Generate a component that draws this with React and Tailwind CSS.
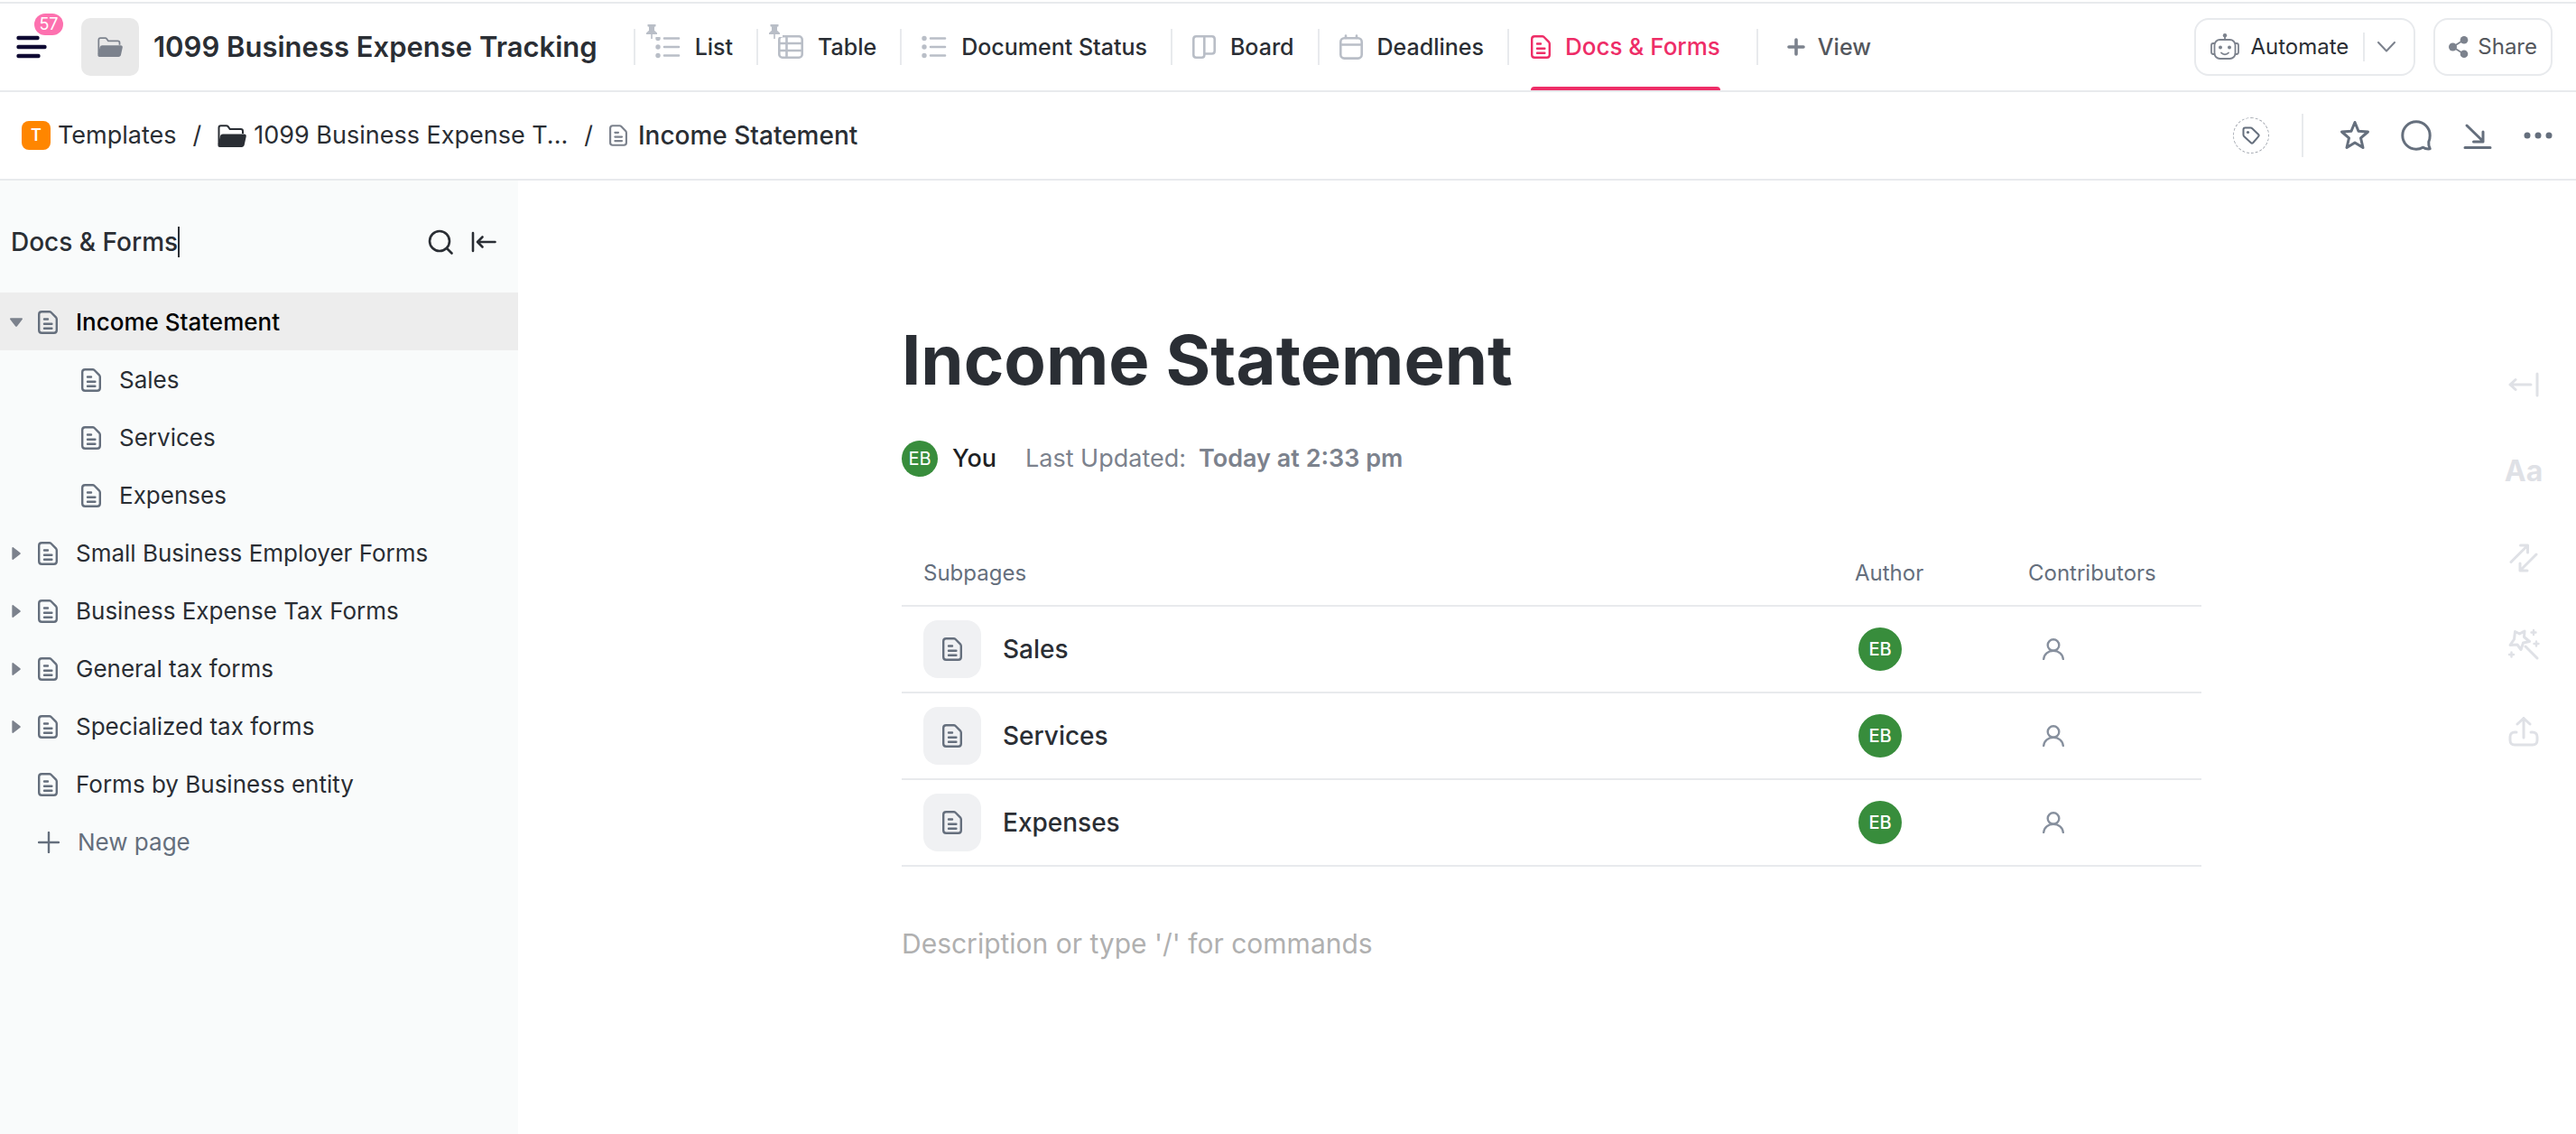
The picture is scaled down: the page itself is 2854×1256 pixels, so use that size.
import React, { useState } from "react"

const DocIcon = ({ className }) => (
  <svg viewBox="0 0 22 26" fill="none" stroke="currentColor" strokeLinecap="round" strokeLinejoin="round" className={className}>
    <path strokeWidth="2.4" d="M4.2 1.2h8.4c.8 0 1.5.3 2 .8l5.3 5.4c.6.6.9 1.4.9 2.2v12.200c0 1.700-1.300 3-3 3H4.200c-1.700 0-3-1.300-3-3V4.200c0-1.700 1.300-3 3-3z" />
    <path strokeWidth="2.4" d="M7 9.500h4M7 14.700h8.400M7 19.700h8.400" />
  </svg>
)

const FolderIcon = ({ className }) => (
  <svg viewBox="0 0 32 25" className={className}>
    <path fill="none" stroke="currentColor" strokeWidth="2" d="M1.500 22V3.500c0-1.400.8-2.300 2.200-2.300h6c.9 0 1.500.3 2 1l2 2.800h12c1.400 0 2.300.9 2.300 2.300V10" />
    <path fill="currentColor" d="M6 10.500h23.500c1.700 0 2.500 1.200 2.200 2.800l-2 9.200c-.4 1.500-1.400 2.500-3 2.500H2.500C1 25 .2 24 .5 22.500L3 12.800c.4-1.500 1.500-2.300 3-2.300z" />
  </svg>
)

const ListIcon = () => (
  <svg viewBox="0 0 28 26" className="h-[26px] w-7" fill="none" stroke="currentColor" strokeWidth="2.6" strokeLinecap="round">
    <path d="M10 3.500h16M10 13h16M10 22.500h16" />
    <g fill="currentColor" stroke="none">
      <circle cx="3" cy="3.500" r="2.700" />
      <circle cx="3" cy="13" r="2.700" />
      <circle cx="3" cy="22.500" r="2.700" />
    </g>
  </svg>
)

const TableIcon = () => (
  <svg viewBox="0 0 28 26" className="h-[26px] w-7" fill="none" stroke="currentColor" strokeWidth="2.6">
    <rect x="1.300" y="1.300" width="25.400" height="23.400" rx="3.500" />
    <path d="M1.200 9h25.600M1.200 17h25.600M9.500 1.200v23.600" />
  </svg>
)

const BoardIcon = () => (
  <svg viewBox="0 0 26 26" className="size-[26px]" fill="none" stroke="currentColor" strokeWidth="2.6" strokeLinejoin="round">
    <path d="M4.300 1.300h17.400c1.700 0 3 1.300 3 3v13.200c0 1.700-1.300 3-3 3h-8.400V22c0 1.600-1.200 2.700-2.800 2.700H4.300c-1.700 0-3-1.300-3-3V4.300c0-1.700 1.300-3 3-3zM13.300 1.300v20" />
  </svg>
)

const CalendarIcon = () => (
  <svg viewBox="0 0 26 28" className="h-7 w-[26px]" fill="none" stroke="currentColor" strokeWidth="2.6" strokeLinecap="round">
    <rect x="1.300" y="4.200" width="23.400" height="22.400" rx="4" />
    <path d="M1.200 11.500h23.600M7 4V1.500M19 4V1.500" />
  </svg>
)

// the white outline cuts the pin out of the icon below it
const PinIcon = () => (
  <svg viewBox="0 0 12 16" className="absolute -left-2.5 -top-3 h-4 w-3 overflow-visible fill-[#b9bec7] stroke-white" strokeWidth="6">
    <path style={{ paintOrder: "stroke" }} d="M1.500 0h9v2.200L9 2.800v4l3 2.700V11H6.800v5H5.200v-5H0V9.500l3-2.700v-4l-1.500-.6z" />
  </svg>
)

const PersonIcon = () => (
  <svg viewBox="0 0 24 24" className="size-6" fill="none" stroke="currentColor" strokeWidth="2.4" strokeLinecap="round">
    <circle cx="12" cy="7.500" r="6.300" />
    <path d="M1.200 23c.5-5.500 5-9.200 10.800-9.200s10.300 3.700 10.800 9.200" />
  </svg>
)

const StrokeIcon = ({ viewBox, d, width, className }) => (
  <svg viewBox={viewBox} className={className} fill="none" stroke="currentColor" strokeWidth={width} strokeLinecap="round" strokeLinejoin="round">
    <path d={d} />
  </svg>
)

const RobotIcon = () => (
  <svg viewBox="0 0 32 30" className="h-[30px] w-8 text-[#7c828d]" fill="none" stroke="currentColor" strokeWidth="1.800" strokeLinecap="round">
    <rect x="4.500" y="7" width="23" height="21" rx="6" />
    <path d="M4.500 11H3.200C1.800 11 1 12 1 13.200v7.600C1 22 1.800 23 3.200 23h1.300M27.500 11h1.300c1.400 0 2.200 1 2.200 2.200v7.600c0 1.200-.8 2.200-2.200 2.200h-1.300M16 7V3M12 21.500c2 2.400 6 2.400 8 0" />
    <g fill="currentColor" stroke="none">
      <circle cx="16" cy="2.200" r="2.200" />
      <circle cx="11" cy="15.500" r="2" />
      <circle cx="21" cy="15.500" r="2" />
    </g>
  </svg>
)

const ShareIcon = () => (
  <svg viewBox="0 0 22 24" className="h-6 w-[22px] text-[#7c828d]" fill="currentColor">
    <path stroke="currentColor" strokeWidth="1.800" fill="none" d="M17 4 4.500 12 17 20" />
    <circle cx="4.500" cy="12" r="4.500" />
    <circle cx="17" cy="4.300" r="4.300" />
    <circle cx="17" cy="19.700" r="4.300" />
  </svg>
)

const WandIcon = () => (
  <svg viewBox="0 0 36 36" className="size-9" fill="none" stroke="currentColor" strokeWidth="3" strokeLinecap="round" strokeLinejoin="round">
    <path d="M8.500 3.500l5 2.500 5.500-3-.5 6.500 6 5-7 1.500-2.500 7.500-4-5.500-8 .5 4.500-6.500zM20 20l13 13" />
    <path strokeWidth="2.400" d="M29 2v5M26.500 4.500h5M32 14.500v5M29.500 17h5M4.500 26.500v5M2 29h5" />
  </svg>
)

const Avatar = ({ className }) => (
  <span className={`flex shrink-0 items-center justify-center rounded-full bg-[#388d3c] text-white ${className}`}>EB</span>
)

const tabs = [
  { name: "List", icon: <ListIcon />, pinned: true },
  { name: "Table", icon: <TableIcon />, pinned: true },
  { name: "Document Status", icon: <ListIcon /> },
  { name: "Board", icon: <BoardIcon /> },
  { name: "Deadlines", icon: <CalendarIcon /> },
  { name: "Docs & Forms", icon: <DocIcon className="h-[26px] w-[22px]" />, active: true }
]

const pages = [
  { name: "Income Statement", open: true, children: ["Sales", "Services", "Expenses"] },
  { name: "Small Business Employer Forms", children: [] },
  { name: "Business Expense Tax Forms", children: [] },
  { name: "General tax forms", children: [] },
  { name: "Specialized tax forms", children: [] },
  { name: "Forms by Business entity" }
]

const tools = [
  {
    label: "Collapse",
    icon: <StrokeIcon viewBox="0 0 34 28" width="3" className="h-7 w-[34px]" d="M25 14H2M8 8.500 2 14l6 5.500M32 2v24" />
  },
  { label: "Typography", icon: <span className="text-[32px] font-bold leading-8">Aa</span> },
  {
    label: "Relationships",
    icon: <StrokeIcon viewBox="0 0 32 32" width="3" className="size-8" d="M2 20.500 20.500 2M12.500 2h8v8M30 12 12 30M12 22v8h8" />
  },
  { label: "Magic", icon: <WandIcon /> },
  {
    label: "Export",
    icon: <StrokeIcon viewBox="0 0 34 34" width="3" className="size-[34px]" d="M17 24V2.500M10 9l7-6.500L24 9M9 18H7c-3 0-5 2-5 5v4c0 3 2 5 5 5h20c3 0 5-2 5-5v-4c0-3-2-5-5-5h-2" />
  }
]

const TopBar = () => (
  <header className="mt-0.5 flex h-[100px] items-center border-y-2 border-[#e8eaed] pl-4 pr-[26px]">
    <button aria-label="Menu" className="relative mr-[38px] pl-0.5">
      <svg viewBox="0 0 34 26" className="h-[26px] w-[34px]" stroke="#0f0a33" strokeWidth="4.400" strokeLinecap="round">
        <path d="M2.500 3h21M2.500 13h29M2.500 23h22" />
      </svg>
      <span className="absolute -top-6 left-[22px] flex h-6 w-8 items-center justify-center rounded-full bg-[#fd71af] text-[18px] leading-6 text-white">57</span>
    </button>
    <span className="mr-4 flex size-16 shrink-0 items-center justify-center rounded-[10px] bg-[#e9e9e9]">
      <FolderIcon className="h-[22px] w-7 text-[#7c828d]" />
    </span>
    <h1 className="whitespace-nowrap text-[31px] font-semibold leading-10">1099 Business Expense Tracking</h1>
    <nav className="ml-10 flex h-full items-center whitespace-nowrap text-[25px] font-medium leading-8">
      {tabs.map(tab => (
        <React.Fragment key={tab.name}>
          <span className="h-10 w-0.5 bg-[#e8eaed]" />
          <a
            href="#"
            className={`relative flex h-full items-center gap-4 ${tab.active ? "ml-6 mr-10 text-[26px] text-[#ee2d67]" : "ml-[22px] mr-[26px]"}`}
          >
            <span className={`relative ${tab.active ? "" : "text-[#b9bec7]"}`}>
              {tab.icon}
              {tab.pinned && <PinIcon />}
            </span>
            {tab.name}
            {tab.active && <span className="absolute inset-x-0 bottom-0 h-1 rounded-t bg-[#ee2d67]" />}
          </a>
        </React.Fragment>
      ))}
      <span className="h-10 w-0.5 bg-[#e8eaed]" />
      <button className="ml-8 flex items-center gap-[14px] text-[#54575d]">
        <StrokeIcon viewBox="0 0 20 20" width="3.600" className="size-5 text-[#7c828d]" d="M10 2v16M2 10h16" />
        View
      </button>
    </nav>
    <div className="ml-auto flex gap-5 text-[24px] leading-8">
      <div className="flex h-16 items-center rounded-2xl border-2 border-[#e8eaed] pl-4">
        <button className="flex items-center gap-3 pr-4">
          <RobotIcon />
          Automate
        </button>
        <button aria-label="Automate options" className="flex h-8 items-center border-l-2 border-[#e8eaed] pl-[14px] pr-5">
          <StrokeIcon viewBox="0 0 20 12" width="2" className="h-3 w-5 text-[#7c828d]" d="M1 1l9 9.500L19 1" />
        </button>
      </div>
      <button className="flex h-16 items-center gap-2.5 rounded-2xl border-2 border-[#e8eaed] px-[15px] text-[#54575d]">
        <ShareIcon />
        Share
      </button>
    </div>
  </header>
)

const Breadcrumbs = () => (
  <div className="flex h-[98px] items-center border-b-2 border-[#e8eaed] pl-6 pr-[26px] text-[27px] leading-8">
    <nav className="flex items-center whitespace-nowrap">
      <a href="#" className="flex items-center gap-2">
        <span className="flex size-8 items-center justify-center rounded-lg bg-[#ff8600] text-[18px] font-semibold leading-6 text-white">T</span>
        Templates
      </a>
      <span className="mx-[18px]">/</span>
      <a href="#" className="flex items-center gap-2">
        <FolderIcon className="h-[25px] w-8" />
        1099 Business Expense T...
      </a>
      <span className="mx-[18px]">/</span>
      <a href="#" className="flex items-center gap-3 text-[28px] font-medium">
        <DocIcon className="h-6 w-5 text-[#7c828d]" />
        Income Statement
      </a>
    </nav>
    <div className="ml-auto flex items-center text-[#656f7d]">
      <button aria-label="Tags" className="flex size-10 items-center justify-center rounded-full border border-dashed border-[#a5aab2]">
        <svg viewBox="0 0 20 20" className="size-5" fill="none" stroke="currentColor" strokeWidth="2" strokeLinejoin="round">
          <path d="M1.500 3.500c0-1.200.8-2 2-2h6c.7 0 1.200.2 1.700.7l6.800 6.600c.8.8.8 1.800 0 2.600L12.300 18c-.8.800-1.800.8-2.600 0L2.200 11c-.5-.5-.7-1-.7-1.700z" />
          <circle cx="6.500" cy="6.500" r="1.600" fill="currentColor" stroke="none" />
        </svg>
      </button>
      <span className="ml-9 mr-10 h-12 w-0.5 bg-[#e8eaed]" />
      <div className="flex items-center gap-[34px]">
        <button aria-label="Favorite">
          <StrokeIcon viewBox="0 0 34 34" width="3" className="size-[34px]" d="M17 2.500l4 9.700 10.500.8-8 6.800 2.500 10.700-9-5.600-9 5.600 2.500-10.700-8-6.800 10.500-.8z" />
        </button>
        <button aria-label="Comments">
          <StrokeIcon viewBox="0 0 34 34" width="3" className="size-[34px]" d="M17 1.800C8.500 1.800 1.800 8.500 1.800 17S8.500 32.200 17 32.200c2.700 0 5.200-.7 7.400-2 2 1.300 4.900 2 7.800 1.600-1.300-2.500-1.700-5-1.400-7.600 1-2.200 1.400-4.600 1.400-7.200C32.200 8.500 25.500 1.800 17 1.800z" />
        </button>
        <button aria-label="Minimize">
          <StrokeIcon viewBox="0 0 34 34" width="3" className="size-[34px]" d="M5 6l18 17.500M23 13v11H12.500M3 30.500h28" />
        </button>
        <button aria-label="More">
          <svg viewBox="0 0 32 8" className="h-2 w-8" fill="currentColor">
            <circle cx="4" cy="4" r="3.500" />
            <circle cx="16" cy="4" r="3.500" />
            <circle cx="28" cy="4" r="3.500" />
          </svg>
        </button>
      </div>
    </div>
  </div>
)

const Sidebar = () => {
  const [title, setTitle] = useState("Docs & Forms")

  return (
    <aside className="w-[574px] shrink-0 bg-[#f9fbfb]">
      <div className="flex h-[124px] items-center pl-3 pr-6 pt-3">
        <input
          aria-label="View name"
          value={title}
          onChange={e => setTitle(e.target.value)}
          className="field-sizing-content h-[34px] border-r-2 border-[#2a2e34] bg-transparent text-[28px] font-medium leading-8 outline-none"
        />
        <div className="ml-auto flex items-center gap-5">
          <button aria-label="Search">
            <StrokeIcon viewBox="0 0 28 28" width="2.600" className="size-7" d="M24 13a11 11 0 1 1-22 0 11 11 0 0 1 22 0zM21 21l5.500 5.500" />
          </button>
          <button aria-label="Hide sidebar">
            <StrokeIcon viewBox="0 0 28 24" width="2.600" className="h-6 w-7" d="M2 2v20M26.500 12H7M12.500 6.500 7 12l5.500 5.500" />
          </button>
        </div>
      </div>
      <ul className="text-[26px] leading-8">
        {pages.map(page => (
          <li key={page.name}>
            <a href="#" className={`flex h-16 items-center pt-0.5 ${page.open ? "bg-[#ededed] font-medium text-black" : ""}`}>
              <span className="flex w-9 justify-center text-[#7c828d]">
                {page.children && (
                  <svg viewBox="0 0 12 12" className={`size-[14px] ${page.open ? "rotate-90" : ""}`} fill="currentColor">
                    <path d="M2 .8c0-.7.7-1 1.200-.6l6.600 5.100c.4.4.4 1 0 1.400l-6.600 5.100c-.5.4-1.200.1-1.200-.6z" />
                  </svg>
                )}
              </span>
              <DocIcon className="ml-1.5 mr-5 h-[26px] w-[22px] text-[#656f7d]" />
              {page.name}
            </a>
            {page.open && (
              <ul>
                {page.children.map(child => (
                  <li key={child}>
                    <a href="#" className="flex h-16 items-center pl-[90px] pt-0.5">
                      <DocIcon className="mr-5 h-[26px] w-[22px] text-[#656f7d]" />
                      {child}
                    </a>
                  </li>
                ))}
              </ul>
            )}
          </li>
        ))}
      </ul>
      <button className="flex h-16 items-center gap-5 pl-[42px] pt-0.5 text-[26px] leading-8 text-[#656f7d]">
        <StrokeIcon viewBox="0 0 24 24" width="2.400" className="size-6" d="M12 1v22M1 12h22" />
        New page
      </button>
    </aside>
  )
}

const Subpages = ({ items }) => (
  <table className="mt-[71px] w-full table-fixed text-left">
    <thead>
      <tr className="h-[72px] border-b-2 border-[#e8eaed] text-[24px] leading-8 text-[#656f7d]">
        <th className="pl-6 font-normal">Subpages</th>
        <th className="w-48 font-normal">Author</th>
        <th className="w-48 font-normal">Contributors</th>
      </tr>
    </thead>
    <tbody>
      {items.map(item => (
        <tr key={item} className="h-24 border-b-2 border-[#e8eaed]">
          <td className="pl-6">
            <a href="#" className="flex items-center gap-6 text-[28px] font-medium leading-8">
              <span className="flex size-16 items-center justify-center rounded-2xl bg-[#f0f1f3]">
                <DocIcon className="h-[26px] w-[22px] text-[#656f7d]" />
              </span>
              {item}
            </a>
          </td>
          <td>
            <div className="flex w-14 justify-center">
              <Avatar className="size-12 text-[20px] font-medium leading-6" />
            </div>
          </td>
          <td>
            <div className="flex w-14 justify-center text-[#87909e]">
              <PersonIcon />
            </div>
          </td>
        </tr>
      ))}
    </tbody>
  </table>
)

const App = () => {
  return (
    <div className="flex min-h-screen flex-col bg-white font-['Inter','Liberation_Sans',sans-serif] text-[#2a2e34]">
      <TopBar />
      <Breadcrumbs />
      <div className="flex grow">
        <Sidebar />
        <main className="relative grow pl-2.5">
          <article className="mx-auto max-w-[1440px] pt-[150px]">
            <h2 className="text-[76px] font-bold leading-[96px]">Income Statement</h2>
            <div className="mt-[42px] flex h-10 items-center text-[27px] leading-8">
              <Avatar className="size-10 text-[20px]" />
              <span className="ml-4 font-medium text-[#1d1f23]">You</span>
              <span className="ml-8 text-[#7c828d]">Last Updated:</span>
              <span className="ml-[14px] font-semibold text-[#7c828d]">Today at 2:33 pm</span>
            </div>
            <Subpages items={pages[0].children} />
            <input
              aria-label="Description"
              placeholder="Description or type '/' for commands"
              className="mt-[65px] w-full text-[30px] leading-10 outline-none placeholder:text-[#b0b0b0]"
            />
          </article>
          <div className="absolute right-[34px] top-[178px] flex flex-col text-[#dfe1e6]">
            {tools.map(tool => (
              <button key={tool.label} aria-label={tool.label} className="flex h-24 w-12 items-center justify-center">
                {tool.icon}
              </button>
            ))}
          </div>
        </main>
      </div>
    </div>
  )
}

export default App
